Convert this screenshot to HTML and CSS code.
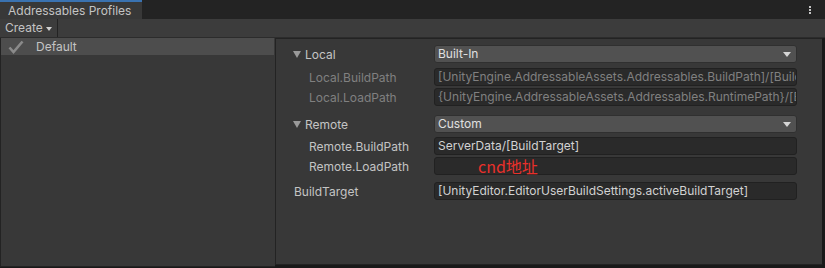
FILE: index.html
```html
<!DOCTYPE html>
<html>
<head>
<meta charset="utf-8">
<link rel="stylesheet" href="styles.css">
</head>
<body>
<div class="window">
  <div class="tabbar">
    <div class="tab">Addressables Profiles</div>
    <div class="kebab"><span></span><span></span><span></span></div>
  </div>
  <div class="toolbar">
    <div class="create">Create <span class="caret"></span></div>
  </div>
  <div class="main">
    <div class="left">
      <div class="row-selected">
        <svg class="check" width="16" height="14" viewBox="0 0 16 14"><path d="M1.5 7.5 L5.5 12 L14.5 1.5" fill="none" stroke="#8a8a8a" stroke-width="2.6" stroke-linejoin="miter"/></svg>
        <span>Default</span>
      </div>
    </div>
    <div class="right">
      <div class="prop sec first">
        <div class="label head"><span class="tri"></span>Local</div>
        <div class="dropdown">Built-In<span class="dcaret"></span></div>
      </div>
      <div class="prop sub lead1">
        <div class="label dim">Local.BuildPath</div>
        <div class="field dimf">[UnityEngine.AddressableAssets.Addressables.BuildPath]/[BuildTarget]</div>
      </div>
      <div class="prop sub">
        <div class="label dim">Local.LoadPath</div>
        <div class="field dimf">{UnityEngine.AddressableAssets.Addressables.RuntimePath}/[BuildTarget]</div>
      </div>
      <div class="prop sec">
        <div class="label head"><span class="tri"></span>Remote</div>
        <div class="dropdown">Custom<span class="dcaret"></span></div>
      </div>
      <div class="prop sub lead2">
        <div class="label">Remote.BuildPath</div>
        <div class="field">ServerData/[BuildTarget]</div>
      </div>
      <div class="prop sub">
        <div class="label">Remote.LoadPath</div>
        <div class="field notefield"><span class="note">cnd地址</span></div>
      </div>
      <div class="prop bt">
        <div class="label">BuildTarget</div>
        <div class="field">[UnityEditor.EditorUserBuildSettings.activeBuildTarget]</div>
      </div>
    </div>
  </div>
</div>
</body>
</html>
```

FILE: styles.css
```css
html, body {
  margin: 0;
  padding: 0;
  background: #191919;
}
.window {
  width: 825px;
  height: 268px;
  font-family: Inter, "Noto Sans", "Noto Sans CJK SC", sans-serif;
  font-size: 12px;
  color: #c4c4c4;
  display: flex;
  flex-direction: column;
  overflow: hidden;
}
.tabbar {
  height: 19px;
  background: #232323;
  display: flex;
  align-items: stretch;
  justify-content: space-between;
  flex: none;
}
.tab {
  width: 142px;
  padding-left: 8px;
  background: #383838;
  border-top: 2px solid #3a72b0;
  box-sizing: border-box;
  line-height: 17px;
  color: #c4c4c4;
}
.kebab {
  width: 4px;
  margin-right: 12px;
  display: flex;
  flex-direction: column;
  justify-content: center;
  gap: 1px;
}
.kebab span {
  display: block;
  width: 2px;
  height: 2px;
  background: #c4c4c4;
}
.toolbar {
  height: 19px;
  background: #3c3c3c;
  display: flex;
  flex: none;
  border-bottom: 1px solid #2c2c2c;
  box-sizing: border-box;
}
.create {
  width: 58px;
  padding-left: 5px;
  box-sizing: border-box;
  border-right: 1px solid #232323;
  line-height: 18px;
  display: flex;
  align-items: center;
  gap: 3px;
  color: #c4c4c4;
}
.caret {
  width: 0;
  height: 0;
  border-left: 3.5px solid transparent;
  border-right: 3.5px solid transparent;
  border-top: 4px solid #d0d0d0;
  margin-top: 1px;
}
.main {
  display: flex;
  height: 228px;
  flex: none;
}
.left {
  width: 275px;
  box-sizing: border-box;
  background: #383838;
  border-left: 1px solid #232323;
  border-bottom: 1px solid #232323;
  height: 229px;
  padding-right: 1px;
}
.row-selected {
  height: 17px;
  background: #4d4d4d;
  display: flex;
  align-items: center;
  padding-left: 7px;
  color: #c4c4c4;
}
.check {
  margin-right: 12px;
}
.right {
  width: 548px;
  box-sizing: border-box;
  background: #383838;
  border: 1px solid #232323;
  border-right: 1px solid #191919;
  height: 227px;
  padding-top: 6px;
}
.prop {
  display: flex;
  align-items: center;
  height: 18px;
}
.prop.sec { margin-top: 9px; }
.prop.sec.first { margin-top: 0; }
.prop.sub { margin-top: 2px; }
.prop.sub.lead1 { margin-top: 5px; }
.prop.sub.lead2 { margin-top: 4px; }
.prop.bt { margin-top: 7px; }
.label {
  width: 158px;
  flex: none;
  box-sizing: border-box;
  padding-left: 33px;
  white-space: nowrap;
}
.label.head {
  padding-left: 17px;
  display: flex;
  align-items: center;
}
.prop.bt .label { padding-left: 18px; }
.label.dim { color: #808080; }
.tri {
  width: 0;
  height: 0;
  border-left: 4px solid transparent;
  border-right: 4px solid transparent;
  border-top: 7px solid #9a9a9a;
  margin-right: 4px;
}
.dropdown {
  width: 363px;
  height: 18px;
  box-sizing: border-box;
  background: #515151;
  border: 1px solid #303030;
  border-radius: 3px;
  padding-left: 3px;
  line-height: 16px;
  display: flex;
  justify-content: space-between;
  align-items: center;
  color: #e0e0e0;
  padding-right: 5px;
}
.dcaret {
  width: 0;
  height: 0;
  border-left: 4px solid transparent;
  border-right: 4px solid transparent;
  border-top: 5px solid #d6d6d6;
}
.field {
  width: 363px;
  height: 18px;
  box-sizing: border-box;
  background: #2a2a2a;
  border: 1px solid #212121;
  border-radius: 3px;
  padding-left: 3px;
  line-height: 16px;
  white-space: nowrap;
  overflow: hidden;
  color: #d2d2d2;
}
.field.notefield {
  overflow: visible;
  display: flex;
  align-items: center;
}
.field.dimf { color: #808080; }
.note {
  color: #e8302a;
  font-size: 16px;
  margin-left: 40px;
  font-family: "Noto Sans CJK SC", sans-serif;
  line-height: 16px;
}
```
